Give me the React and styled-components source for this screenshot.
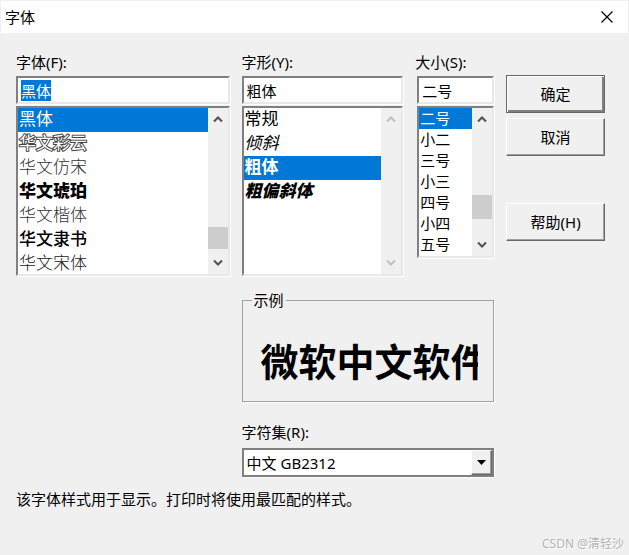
import React, { useEffect, useRef, useState } from 'react'
import styled, { createGlobalStyle, css } from 'styled-components'

const GlobalStyle = createGlobalStyle`
  * {
    box-sizing: border-box;
  }
  body {
    margin: 0;
    background: #f0f0f0;
    color: #000;
  }
  body, button, input, select {
    font-family: "Noto Sans", "Noto Sans CJK SC", sans-serif;
    font-size: 15px;
    line-height: 20px;
  }
`

const sunken = css`
  border: 2px solid;
  border-color: #808080 #e8e8e8 #e8e8e8 #808080;
  box-shadow: 1px 1px 0 #fff;
`

const raised = css`
  border: 1px solid;
  border-color: #fff #696969 #696969 #fff;
  box-shadow: inset -1px -1px 0 #a0a0a0;
`

const Dialog = styled.main`
  display: flex;
  flex-direction: column;
  min-height: 100vh;
  border: 1px solid #f0f0f0;
  background: #f0f0f0;
`

const TitleBar = styled.header`
  display: flex;
  align-items: center;
  justify-content: space-between;
  height: 32px;
  padding-left: 4px;
  background: #fff;
  h1 {
    margin: 0;
    font-size: 15px;
    font-weight: 400;
  }
`

const CloseButton = styled.button`
  display: flex;
  align-items: center;
  justify-content: center;
  width: 42px;
  height: 32px;
  padding: 0;
  border: 0;
  background: none;
`

const Form = styled.form`
  display: grid;
  grid-template-columns: 214fr 162fr 79fr 99fr;
  column-gap: 12px;
  align-items: start;
  padding: 19px 23px 0 15px;
`

const Field = styled.div`
  display: flex;
  flex-direction: column;
  min-width: 0;
`

const Label = styled.label`
  height: 24px;
`

const Boxes = styled.div`
  display: flex;
  flex-direction: column;
  gap: 2px;
  padding-left: ${p => p.$indent ? 2 : 0}px;
`

const TextBox = styled.input`
  ${sunken}
  width: 100%;
  height: 28px;
  padding: 0 3px;
  background: #fff;
  outline: 0;
  &::selection {
    background: #0078d7;
    color: #fff;
  }
`

const ListFrame = styled.div`
  ${sunken}
  display: flex;
  height: ${p => p.$height}px;
  background: #fff;
`

const Options = styled.ul`
  flex: 1;
  min-width: 0;
  margin: 0;
  padding: 0;
  overflow: hidden;
  list-style: none;
`

const Option = styled.li`
  height: ${p => p.$compact ? 21 : 24}px;
  padding-left: 1px;
  font-size: ${p => p.$compact ? 15 : 17}px;
  line-height: ${p => p.$compact ? 21 : 22}px;
  white-space: nowrap;
  cursor: default;
  ${p => p.$look}
  ${p => p.$selected && css`
    background: #0078d7;
    color: #fff;
  `}
`

const ScrollBar = styled.div`
  display: flex;
  flex-direction: column;
  width: 20px;
  background: #f0f0f0;
`

const ScrollButton = styled.button`
  display: flex;
  align-items: center;
  justify-content: center;
  height: 22px;
  padding: 0;
  border: 0;
  background: none;
  color: #505050;
  &:disabled {
    color: #bfbfbf;
  }
`

const Track = styled.div`
  display: flex;
  flex: 1;
  flex-direction: column;
  justify-content: flex-end;
  padding-bottom: ${p => p.$rest}px;
`

const Thumb = styled.div`
  height: ${p => p.$size}px;
  background: #cdcdcd;
`

const Actions = styled.div`
  display: flex;
  flex-direction: column;
  gap: 5px;
  padding-top: 23px;
`

const PushButton = styled.button`
  ${raised}
  height: 38px;
  padding: 0;
  background: #f0f0f0;
  color: #000;
  ${p => p.$default && css`
    border-color: #696969;
    box-shadow: inset 1px 1px 0 #fff, inset -2px -2px 0 #808080;
  `}
  ${p => p.$apart && css`
    margin-top: 42px;
  `}
`

const Lower = styled.div`
  grid-column: 2 / 4;
  min-width: 0;
  margin-top: 14px;
`

const Group = styled.fieldset`
  min-width: 0;
  height: 112px;
  margin: 0 0 20px;
  padding: 26px 15px 0 18px;
  border: 1px solid #a0a0a0;
  box-shadow: 1px 1px 0 #fff;
  legend {
    margin-left: -9px;
    padding: 0 2px;
  }
`

const Sample = styled.div`
  overflow: hidden;
  font-family: "Noto Sans CJK SC", sans-serif;
  font-size: 38px;
  font-weight: 700;
  line-height: 48px;
  white-space: nowrap;
`

const Combo = styled.div`
  ${sunken}
  position: relative;
  height: 29px;
  margin-top: 2px;
  background: #fff;
  border-right-color: #808080;
  border-bottom-color: #808080;
`

const Select = styled.select`
  width: 100%;
  height: 100%;
  padding: 0 24px 0 3px;
  border: 0;
  background: transparent;
  color: #000;
  appearance: none;
  outline: 0;
`

const DropArrow = styled.span`
  ${raised}
  position: absolute;
  top: 0;
  right: 0;
  bottom: 0;
  display: flex;
  align-items: center;
  justify-content: center;
  width: 21px;
  background: #f0f0f0;
  pointer-events: none;
`

const Note = styled.p`
  margin: 12px 15px 0;
`

const Watermark = styled.footer`
  margin-top: auto;
  padding: 0 4px;
  color: #b4b4b4;
  font-size: 12px;
  text-align: right;
  text-shadow: 1px 1px 0 #fff;
`

const fonts = [
  { name: '黑体' },
  { name: '华文彩云', look: css`color: #fff; -webkit-text-stroke: 2px #444; paint-order: stroke fill;` },
  { name: '华文仿宋', look: css`color: #333; font-weight: 300;` },
  { name: '华文琥珀', look: css`font-weight: 900;` },
  { name: '华文楷体', look: css`color: #333; font-weight: 300;` },
  { name: '华文隶书', look: css`font-weight: 500;` },
  { name: '华文宋体', look: css`color: #222; font-weight: 300;` }
]

const styles = [
  { name: '常规' },
  { name: '倾斜', look: css`font-style: italic;` },
  { name: '粗体', look: css`font-weight: 700;` },
  { name: '粗偏斜体', look: css`font-style: italic; font-weight: 900;` }
]

const sizes = ['二号', '小二', '三号', '小三', '四号', '小四', '五号'].map(name => ({ name }))

function Chevron ({ down }) {
  return (
    <svg width='10' height='8' viewBox='0 0 10 8' fill='none' stroke='currentColor' strokeWidth='2'>
      <path d={down ? 'M1 1.5L5 5.5L9 1.5' : 'M1 6.5L5 2.5L9 6.5'} />
    </svg>
  )
}

function ListBox ({ label, items, value, onChange, height, compact, thumb, rest }) {
  const list = useRef(null)
  const scroll = dir => list.current.scrollBy(0, dir * (compact ? 21 : 24))

  return (
    <ListFrame $height={height}>
      <Options ref={list} role='listbox' aria-label={label}>
        {items.map(item => (
          <Option
            key={item.name}
            role='option'
            aria-selected={item.name === value}
            $selected={item.name === value}
            $look={item.look}
            $compact={compact}
            onClick={() => onChange(item.name)}
          >
            {item.name}
          </Option>
        ))}
      </Options>
      <ScrollBar>
        <ScrollButton type='button' aria-label='向上滚动' disabled={!thumb} onClick={() => scroll(-1)}>
          <Chevron />
        </ScrollButton>
        <Track $rest={rest}>{thumb && <Thumb $size={thumb} />}</Track>
        <ScrollButton type='button' aria-label='向下滚动' disabled={!thumb} onClick={() => scroll(1)}>
          <Chevron down />
        </ScrollButton>
      </ScrollBar>
    </ListFrame>
  )
}

function Picker ({ id, label, name, value, onChange, inputRef, indent, ...list }) {
  return (
    <Field>
      <Label htmlFor={id}>{label}</Label>
      <Boxes $indent={indent}>
        <TextBox id={id} ref={inputRef} value={value} onChange={e => onChange(e.target.value)} />
        <ListBox label={name} value={value} onChange={onChange} {...list} />
      </Boxes>
    </Field>
  )
}

function App () {
  const [font, setFont] = useState('黑体')
  const [style, setStyle] = useState('粗体')
  const [size, setSize] = useState('二号')
  const fontInput = useRef(null)

  useEffect(() => {
    fontInput.current.focus()
    fontInput.current.select()
  }, [])

  return (
    <Dialog>
      <GlobalStyle />
      <TitleBar>
        <h1>字体</h1>
        <CloseButton type='button' aria-label='关闭'>
          <svg width='12' height='12' viewBox='0 0 12 12' fill='none' stroke='#000' strokeWidth='1.2'>
            <path d='M0.5 0.5L11.5 11.5M11.5 0.5L0.5 11.5' />
          </svg>
        </CloseButton>
      </TitleBar>

      <Form onSubmit={e => e.preventDefault()}>
        <Picker id='font' label='字体(F):' name='字体' items={fonts} value={font} onChange={setFont} inputRef={fontInput} height={170} thumb={22} rest={3} />
        <Picker id='style' label='字形(Y):' name='字形' items={styles} value={style} onChange={setStyle} height={170} />
        <Picker id='size' label='大小(S):' name='大小' items={sizes} value={size} onChange={setSize} height={152} thumb={24} rest={15} compact indent />

        <Actions>
          <PushButton type='submit' $default>确定</PushButton>
          <PushButton type='button'>取消</PushButton>
          <PushButton type='button' $apart>帮助(H)</PushButton>
        </Actions>

        <Lower>
          <Group>
            <legend>示例</legend>
            <Sample>微软中文软件</Sample>
          </Group>
          <Field>
            <Label htmlFor='charset'>字符集(R):</Label>
            <Combo>
              <Select id='charset' defaultValue='gb2312'>
                <option value='gb2312'>中文 GB2312</option>
              </Select>
              <DropArrow>
                <svg width='9' height='5' viewBox='0 0 9 5'>
                  <path d='M0 0H9L4.5 5Z' fill='#000' />
                </svg>
              </DropArrow>
            </Combo>
          </Field>
        </Lower>
      </Form>

      <Note>该字体样式用于显示。打印时将使用最匹配的样式。</Note>
      <Watermark>CSDN @清轻沙</Watermark>
    </Dialog>
  )
}

export default App
